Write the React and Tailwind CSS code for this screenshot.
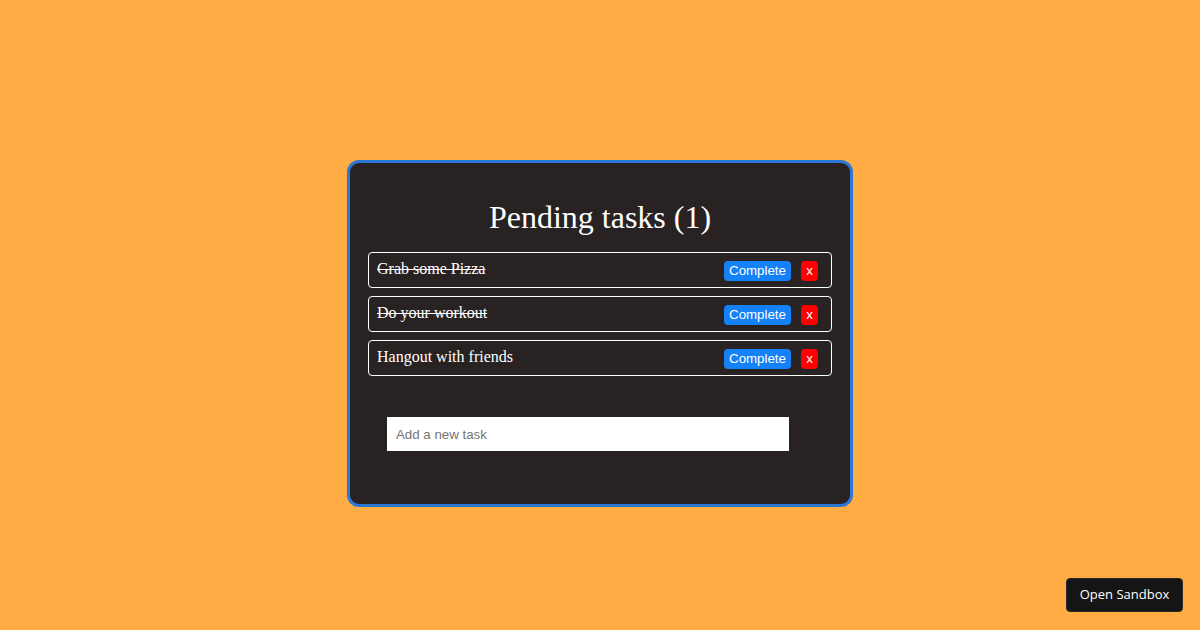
import React, { useState } from 'react';

const initialTasks = [
  { id: 1, text: 'Grab some Pizza', done: true },
  { id: 2, text: 'Do your workout', done: true },
  { id: 3, text: 'Hangout with friends', done: false },
];

function TaskRow({ task }) {
  return (
    <div className="flex h-[36px] items-center rounded-[4px] border border-white pl-[8px] pr-[13px]">
      <span
        className={`flex-1 pb-[2px] text-[16px] text-white ${task.done ? 'line-through' : ''}`}
        style={{ fontFamily: '"Liberation Serif", serif' }}
      >
        {task.text}
      </span>
      <button className="mr-[10px] mt-[2px] h-[20px] w-[67px] rounded-[4px] bg-[#1481f7] text-[13.3px] leading-none text-white font-['Liberation_Sans',Arial,sans-serif]">
        Complete
      </button>
      <button className="mt-[2px] h-[20px] w-[17px] rounded-[4px] bg-[#ff0000] text-[13.3px] leading-none text-white font-['Liberation_Sans',Arial,sans-serif]">
        x
      </button>
    </div>
  );
}

export default function App() {
  const [tasks] = useState(initialTasks);
  const pending = tasks.filter((t) => !t.done).length;

  return (
    <div className="relative flex h-[630px] w-full items-start justify-center bg-[#ffac45] pt-[160px]">
      <div className="w-[506px] rounded-[12px] border-[3px] border-[#2b78d4] bg-[#292223] px-[18px] pt-[36px] pb-[53px]">
        <h1
          className="text-center text-[32px] leading-[37px] text-white"
          style={{ fontFamily: '"Liberation Serif", serif' }}
        >
          Pending tasks ({pending})
        </h1>
        <div className="mt-[16px] flex flex-col gap-[8px]">
          {tasks.map((task) => (
            <TaskRow key={task.id} task={task} />
          ))}
        </div>
        <input
          type="text"
          placeholder="Add a new task"
          className="ml-[19px] mt-[41px] block h-[34px] w-[402px] bg-white px-[9px] text-[13.3px] text-black outline-none placeholder:text-[#757575] font-['Liberation_Sans',Arial,sans-serif]"
        />
      </div>

      <button className="absolute bottom-[18px] right-[17px] h-[34px] w-[117px] rounded-[4px] border border-[#2a2a2a] bg-[#151515] text-[13px] font-medium text-white font-['Open_Sans',sans-serif]">
        Open Sandbox
      </button>
    </div>
  );
}
